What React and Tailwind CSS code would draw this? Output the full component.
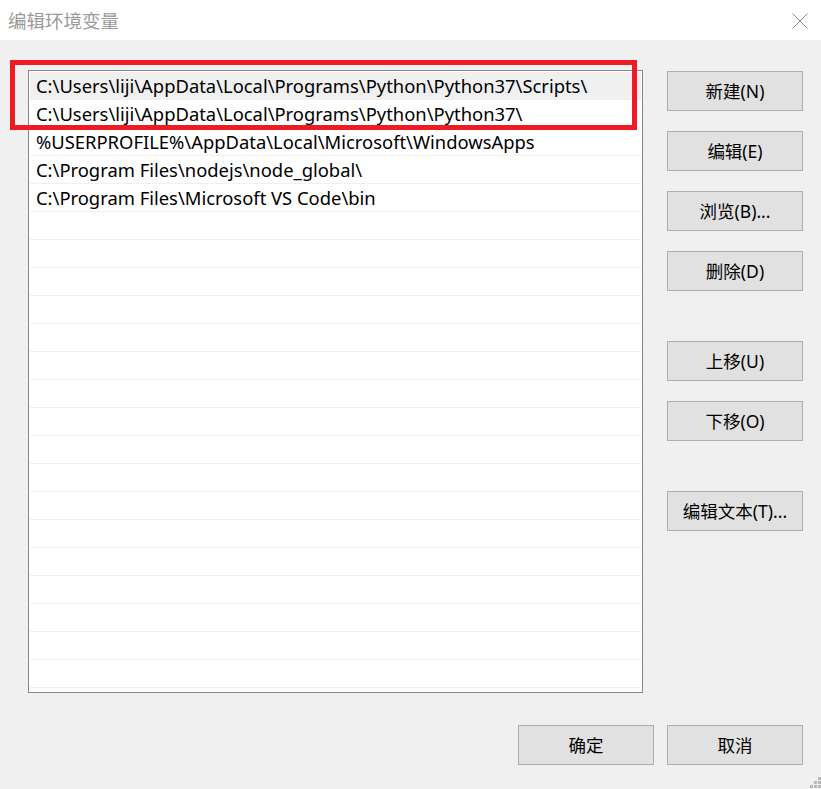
import React from "react";

const rows = [
  "C:\\Users\\liji\\AppData\\Local\\Programs\\Python\\Python37\\Scripts\\",
  "C:\\Users\\liji\\AppData\\Local\\Programs\\Python\\Python37\\",
  "%USERPROFILE%\\AppData\\Local\\Microsoft\\WindowsApps",
  "C:\\Program Files\\nodejs\\node_global\\",
  "C:\\Program Files\\Microsoft VS Code\\bin",
];

const allRows = Array.from({ length: 22 }, (_, i) => rows[i] || "");

function Btn({ children, className = "" }) {
  return (
    <div
      className={
        "w-[136px] h-[40px] bg-[#e1e1e1] border border-[#adadad] flex items-center justify-center pt-[1px] text-[17.5px] text-black " +
        className
      }
    >
      {children}
    </div>
  );
}

export default function App() {
  return (
    <div
      className="relative w-[821px] h-[789px] bg-[#f0f0f0] overflow-hidden"
      style={{ fontFamily: '"Noto Sans", "Noto Sans CJK SC", sans-serif' }}
    >
      {/* title bar */}
      <div className="h-[40px] bg-white flex items-center justify-between pl-[8px] pr-[13px]">
        <span
          className="text-[18.5px] text-[#9a9a9a] leading-none"
          style={{ fontFamily: '"Noto Sans CJK SC", sans-serif' }}
        >
          编辑环境变量
        </span>
        <svg width="16" height="16" viewBox="0 0 16 16" className="mt-[1px]">
          <path d="M0.5 0.5 L15.5 15.5 M15.5 0.5 L0.5 15.5" stroke="#8a8a8a" strokeWidth="1" fill="none" />
        </svg>
      </div>

      {/* content */}
      <div className="flex pl-[28px] pt-[30px]">
        <div className="w-[615px] h-[623px] bg-white border border-[#828790] pt-[1px] px-[1px] overflow-hidden">
          {allRows.map((t, i) => (
            <div
              key={i}
              className={
                "h-[28px] border-b border-[#f0f0f0] flex items-center pl-[6px] text-[18.4px] text-black whitespace-nowrap " +
                (i === 0 ? "bg-[#f0f0f0]" : "")
              }
            >
              {t}
            </div>
          ))}
        </div>

        <div className="ml-[24px] mt-[1px] flex flex-col">
          <Btn>新建(N)</Btn>
          <Btn className="mt-[20px]">编辑(E)</Btn>
          <Btn className="mt-[20px]">浏览(B)...</Btn>
          <Btn className="mt-[20px]">删除(D)</Btn>
          <Btn className="mt-[50px]">上移(U)</Btn>
          <Btn className="mt-[20px]">下移(O)</Btn>
          <Btn className="mt-[50px]">编辑文本(T)...</Btn>
        </div>
      </div>

      {/* bottom buttons */}
      <div className="flex justify-end gap-[13px] pr-[18px] mt-[32px]">
        <Btn>确定</Btn>
        <Btn>取消</Btn>
      </div>

      {/* red highlight box */}
      <div className="absolute left-[10px] top-[60px] w-[627px] h-[70px] border-[5px] border-[#ed1c24]" />

      {/* resize grip */}
      <svg className="absolute right-0 bottom-0" width="12" height="14" viewBox="0 0 12 14">
        <rect x="9" y="2" width="3" height="3" fill="#b8b8b8" />
        <rect x="5" y="6" width="3" height="3" fill="#b8b8b8" />
        <rect x="9" y="6" width="3" height="3" fill="#b8b8b8" />
        <rect x="1" y="10" width="3" height="3" fill="#b8b8b8" />
        <rect x="5" y="10" width="3" height="3" fill="#b8b8b8" />
        <rect x="9" y="10" width="3" height="3" fill="#b8b8b8" />
      </svg>
    </div>
  );
}
